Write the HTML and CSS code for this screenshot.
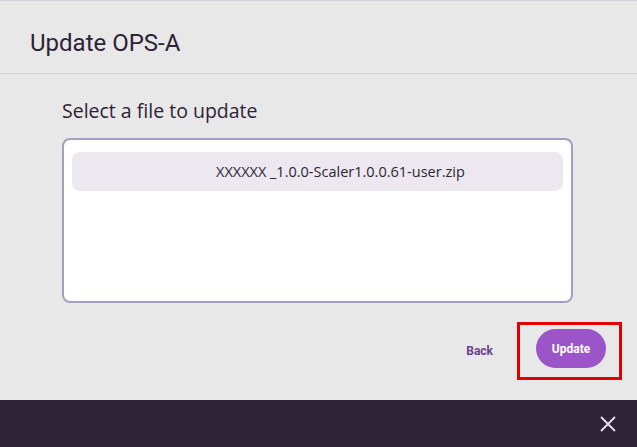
FILE: index.html
```html
<!DOCTYPE html>
<html lang="en">
<head>
    <meta charset="UTF-8">
    <meta name="viewport" content="width=device-width, initial-scale=1.0">
    <title>Update OPS-A</title>
    <link rel="stylesheet" href="styles.css">
</head>
<body>
    <div class="dialog">
        <div class="dialog-header">
            <h2>Update OPS-A</h2>
        </div>

        <div class="dialog-body">
            <h3>Select a file to update</h3>
            <div class="file-list">
                <div class="file-item">XXXXXX _1.0.0-Scaler1.0.0.61-user.zip</div>
            </div>
        </div>

        <div class="dialog-actions">
            <button type="button" class="backButton">Back</button>
            <div class="highlight">
                <button type="button" class="updateButton">Update</button>
            </div>
        </div>
    </div>

    <div class="footer-bar">
        <button type="button" class="closeButton" aria-label="Close">
            <svg width="16" height="16" viewBox="0 0 16 16">
                <path d="M1 1 L15 15 M15 1 L1 15" stroke="#e6e2ea" stroke-width="1.8" fill="none"/>
            </svg>
        </button>
    </div>
</body>
</html>
```

FILE: styles.css
```css
body {
    margin: 0;
    background-color: #e8e8e8;
    font-family: 'Open Sans', 'Noto Sans', sans-serif;
    color: #2e2236;
}

.dialog {
    height: 400px;
    border-top: 1px solid #d8d0e4;
    box-sizing: border-box;
}

.dialog-header {
    height: 73px;
    border-bottom: 1px solid #d2cdd8;
    box-sizing: border-box;
    padding: 29px 30px 0;
}

h2 {
    margin: 0;
    font-family: 'Roboto', sans-serif;
    font-weight: 400;
    font-size: 24px;
    line-height: 26px;
    color: #2e2236;
}

.dialog-body {
    padding: 24px 64px 0 62px;
}

h3 {
    margin: 0 0 14px;
    font-weight: 400;
    font-size: 19.5px;
    line-height: 26px;
    color: #2e2236;
}

.file-list {
    height: 165px;
    background-color: #fff;
    border: 2px solid #a39fc2;
    border-radius: 8px;
    box-sizing: border-box;
    padding: 12px 8px;
}

.file-item {
    height: 39px;
    line-height: 39px;
    background-color: #ede8f0;
    border-radius: 8px;
    padding-left: 144px;
    font-size: 14.5px;
    color: #2b2630;
}

.dialog-actions {
    display: flex;
    justify-content: flex-end;
    align-items: center;
    padding: 19px 15px 0 0;
    gap: 24px;
}

button {
    font-family: 'Roboto', sans-serif;
    font-weight: 700;
    font-size: 12px;
    border: none;
    cursor: pointer;
}

.backButton {
    background: none;
    color: #6b3f8c;
    padding: 0;
}

.highlight {
    border: 3px solid #e00000;
    padding: 4px 13px 9px 16px;
    height: 58px;
    box-sizing: border-box;
    width: 105px;
}

.updateButton {
    background-color: #9b55c8;
    color: #fff;
    width: 70px;
    height: 39px;
    border-radius: 20px;
}

.footer-bar {
    height: 47px;
    background-color: #2e2236;
    display: flex;
    justify-content: flex-end;
    align-items: center;
}

.closeButton {
    background: none;
    padding: 0;
    margin-right: 21px;
    height: 16px;
}
```
